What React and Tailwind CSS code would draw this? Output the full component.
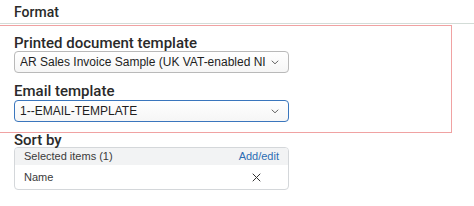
import React from "react";

function Chevron() {
  return (
    <svg width="8" height="5" viewBox="0 0 8 5" className="shrink-0">
      <path d="M1 1 L4 3.8 L7 1" fill="none" stroke="#666" strokeWidth="1" strokeLinecap="round" strokeLinejoin="round" />
    </svg>
  );
}

function Select({ value, focused }) {
  return (
    <div
      className={
        "w-[275px] h-[22px] rounded-[4px] flex items-center pl-[5px] pr-[9px] bg-gradient-to-b from-white to-[#f6f6f6] " +
        (focused ? "border-[1.5px] border-[#3a76bd]" : "border border-[#b9b9b9]")
      }
    >
      <span className="flex-1 overflow-hidden whitespace-nowrap text-[12px] leading-[15px] text-[#1e1e1e] mr-[6px]">{value}</span>
      <Chevron />
    </div>
  );
}

const head = { fontFamily: 'Roboto, "Liberation Sans", Arial, sans-serif' };

export default function App() {
  return (
    <div className="w-[474px] h-[206px] overflow-hidden bg-white" style={{ fontFamily: '"Liberation Sans", Arial, Helvetica, sans-serif' }}>
      <div style={head} className="h-[24px] border-b border-[#d3dcd7] pl-[14px] pt-[4px] text-[14px] leading-[17px] font-medium text-[#2a2a2a]">
        Format
      </div>
      <div className="ml-[-2px] w-[454px] mt-[1px] h-[108px] border border-[#f0a2a2] pl-[15px] pt-[9px]">
        <div style={head} className="text-[15px] leading-[16px] font-medium text-[#2a2a2a]">Printed document template</div>
        <Select value="AR Sales Invoice Sample (UK VAT-enabled NI" />
        <div style={head} className="mt-[10px] text-[15px] leading-[16px] font-medium text-[#2a2a2a]">Email template</div>
        <div className="mt-[1px]">
          <Select value="1--EMAIL-TEMPLATE" focused />
        </div>
      </div>
      <div className="pl-[14px]">
        <div style={head} className="text-[15px] leading-[13px] font-medium text-[#2a2a2a] pt-[1px]">Sort by</div>
        <div className="w-[275px] h-[43px] rounded-[4px] border border-[#d4d7da] overflow-hidden">
          <div className="h-[17px] bg-[#f2f3f4] flex items-center pl-[9px] pr-[9px]">
            <span className="flex-1 text-[11px] leading-[13px] text-[#3a3a3a]">Selected items (1)</span>
            <span className="text-[11px] leading-[13px] text-[#2c6db3]">Add/edit</span>
          </div>
          <div className="h-[24px] flex items-center pl-[9px] pr-[27px]">
            <span className="flex-1 text-[11px] leading-[13px] text-[#3a3a3a]">Name</span>
            <svg width="9" height="9" viewBox="0 0 9 9">
              <path d="M1 1 L8 8 M8 1 L1 8" stroke="#333" strokeWidth="1" strokeLinecap="round" />
            </svg>
          </div>
        </div>
      </div>
    </div>
  );
}
